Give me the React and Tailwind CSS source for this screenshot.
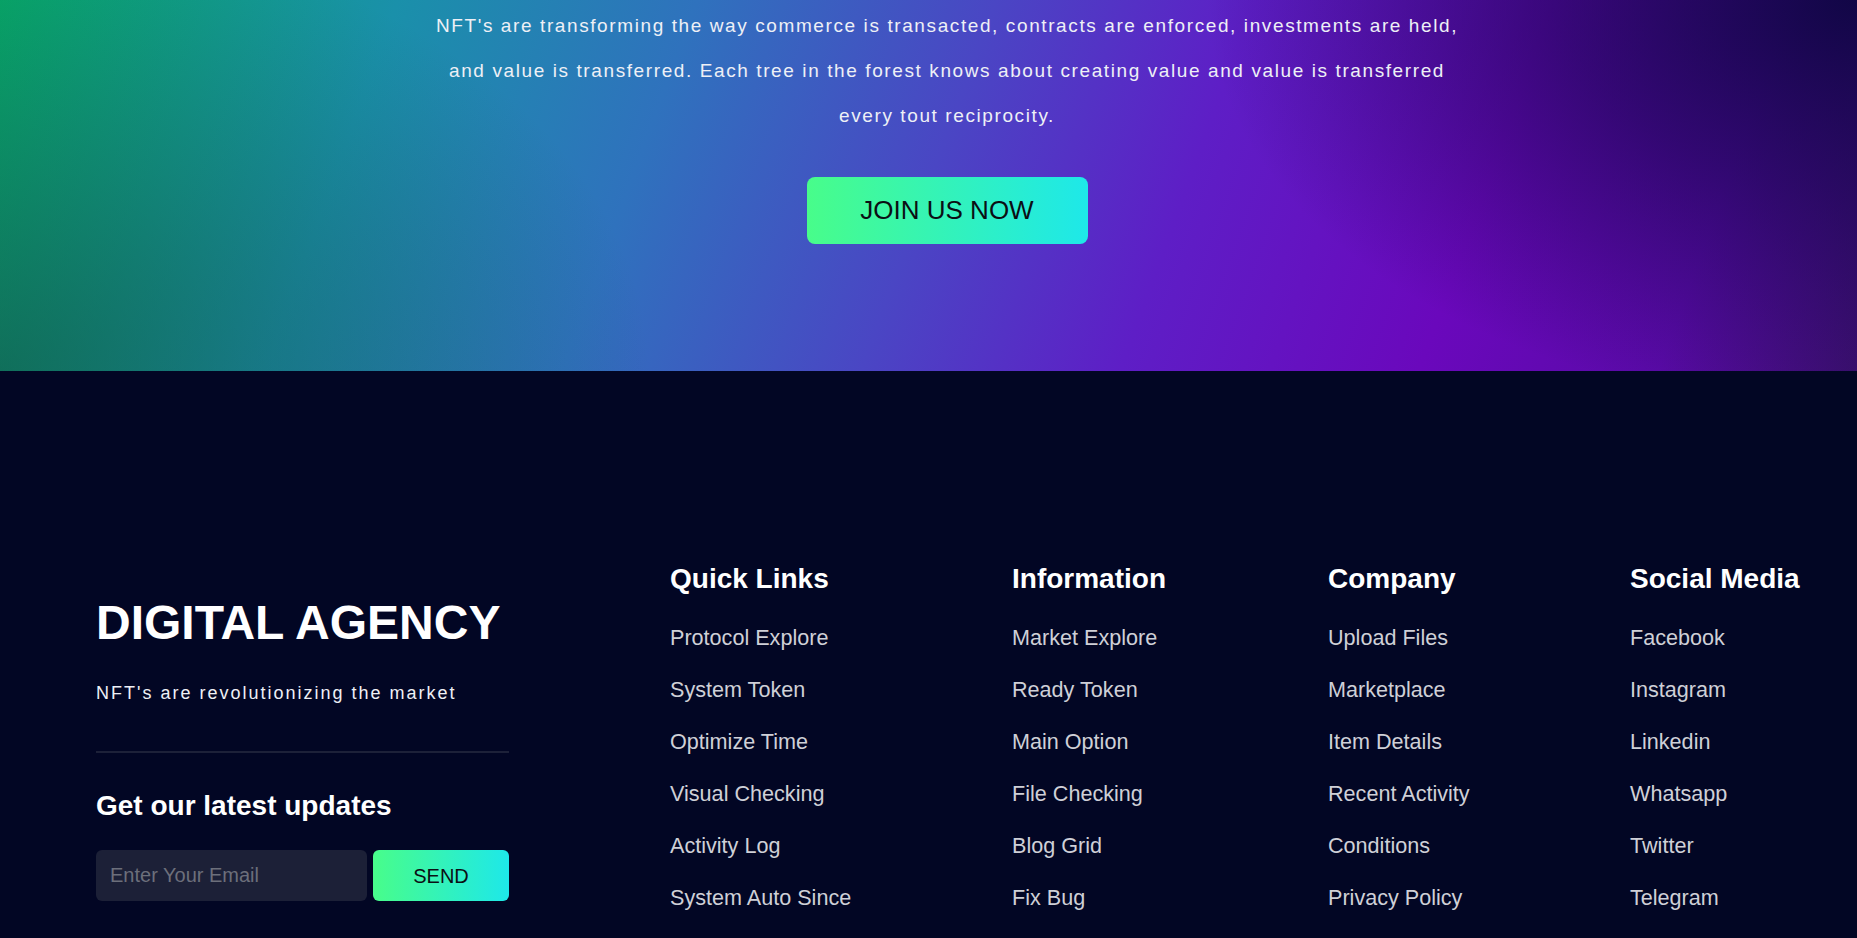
import React from "react";

const columns = [
  {
    title: "Quick Links",
    width: "w-[342px]",
    links: ["Protocol Explore", "System Token", "Optimize Time", "Visual Checking", "Activity Log", "System Auto Since"],
  },
  {
    title: "Information",
    width: "w-[316px]",
    links: ["Market Explore", "Ready Token", "Main Option", "File Checking", "Blog Grid", "Fix Bug"],
  },
  {
    title: "Company",
    width: "w-[302px]",
    links: ["Upload Files", "Marketplace", "Item Details", "Recent Activity", "Conditions", "Privacy Policy"],
  },
  {
    title: "Social Media",
    width: "flex-1",
    links: ["Facebook", "Instagram", "Linkedin", "Whatsapp", "Twitter", "Telegram"],
  },
];

function Hero() {
  return (
    <section className="relative h-[371px] bg-[radial-gradient(35%_110%_at_100%_0%,rgba(14,6,66,0.95)_0%,rgba(14,6,66,0.55)_45%,rgba(14,6,66,0)_100%),radial-gradient(35%_120%_at_0%_100%,rgba(18,70,60,0.55)_0%,rgba(18,70,60,0)_100%),linear-gradient(110deg,#07aa6a_0%,#1a90aa_20%,#2f72bd_35%,#4a46c4_50%,#5e1ec6_63%,#6a08bc_78%,#5a0aa8_90%,#3c1070_100%)]">
      <div className="flex flex-col items-center pt-[3px] pl-[37px]">
        <p className="text-center text-[19px] leading-[45px] tracking-[1.6px] text-[#eef0f6] whitespace-nowrap">
          NFT's are transforming the way commerce is transacted, contracts are enforced, investments are held,
          <br />
          and value is transferred. Each tree in the forest knows about creating value and value is transferred
          <br />
          every tout reciprocity.
        </p>
        <button className="mt-[39px] h-[67px] w-[281px] rounded-[8px] bg-[linear-gradient(90deg,#48fd8a_0%,#1ee8e9_100%)] text-[26px] text-[#0b0f14]">
          JOIN US NOW
        </button>
      </div>
    </section>
  );
}

function Footer() {
  return (
    <footer className="flex-1 bg-[#020624] pt-[191px] pl-[96px]">
      <div className="flex">
        <div className="mt-[37px] flex w-[413px] flex-col">
          <h2 className="text-[48px] font-bold leading-[48px] text-white">DIGITAL AGENCY</h2>
          <p className="mt-[32px] text-[18px] leading-[28px] tracking-[2px] text-[#eef0f6]">
            NFT's are revolutionizing the market
          </p>
          <div className="mt-[44px] h-[2px] w-full bg-[#1d2139]" />
          <h3 className="mt-[36px] text-[28px] font-bold leading-[34px] text-white">Get our latest updates</h3>
          <form className="mt-[27px] flex h-[51px] gap-[6px]" onSubmit={(e) => e.preventDefault()}>
            <input
              type="email"
              placeholder="Enter Your Email"
              className="h-full w-[271px] rounded-[6px] bg-[#1c2037] px-[14px] text-[20px] text-white outline-none placeholder:text-[#6c6f7b]"
            />
            <button
              type="submit"
              className="h-full flex-1 rounded-[6px] bg-[linear-gradient(90deg,#48fd8a_0%,#1ee8e9_100%)] text-[20px] text-[#0b0f14]"
            >
              SEND
            </button>
          </form>
        </div>

        <div className="ml-[161px] flex flex-1">
          {columns.map((col) => (
            <div key={col.title} className={col.width}>
              <h4 className="text-[28px] font-bold leading-[34px] text-white">{col.title}</h4>
              <ul className="mt-[16px]">
                {col.links.map((link) => (
                  <li key={link} className="text-[21.6px] leading-[52px] text-[#cfd0d7]">
                    <a href="#">{link}</a>
                  </li>
                ))}
              </ul>
            </div>
          ))}
        </div>
      </div>
    </footer>
  );
}

export default function App() {
  return (
    <div className="flex h-[938px] flex-col overflow-hidden font-['Liberation_Sans',Arial,sans-serif]">
      <Hero />
      <Footer />
    </div>
  );
}
